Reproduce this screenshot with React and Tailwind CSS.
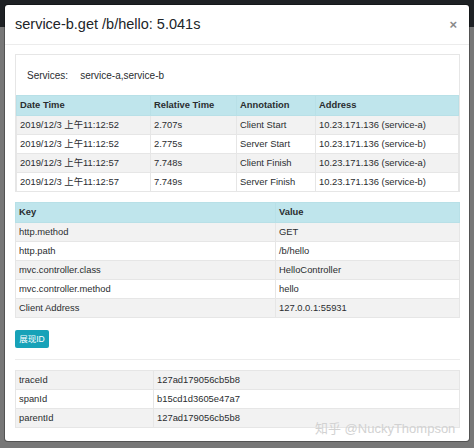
import React from 'react'

const spans = [
  ['2019/12/3 上午11:12:52', '2.707s', 'Client Start', '10.23.171.136 (service-a)'],
  ['2019/12/3 上午11:12:52', '2.775s', 'Server Start', '10.23.171.136 (service-b)'],
  ['2019/12/3 上午11:12:57', '7.748s', 'Client Finish', '10.23.171.136 (service-a)'],
  ['2019/12/3 上午11:12:57', '7.749s', 'Server Finish', '10.23.171.136 (service-b)'],
]

const tags = [
  ['http.method', 'GET'],
  ['http.path', '/b/hello'],
  ['mvc.controller.class', 'HelloController'],
  ['mvc.controller.method', 'hello'],
  ['Client Address', '127.0.0.1:55931'],
]

const ids = [
  ['traceId', '127ad179056cb5b8'],
  ['spanId', 'b15cd1d3605e47a7'],
  ['parentId', '127ad179056cb5b8'],
]

const Table = ({ head, rows, widths }) => (
  <table className="w-full table-fixed border-collapse text-[9.4px] text-[#2a2d30]">
    <colgroup>
      {widths.map((w, i) => (
        <col key={i} className={w} />
      ))}
    </colgroup>
    {head && (
      <thead>
        <tr className="h-[20px] bg-[#bfe5ec]">
          {head.map((h) => (
            <th key={h} className="border border-[#b8e0e7] px-[3px] text-left font-bold">
              {h}
            </th>
          ))}
        </tr>
      </thead>
    )}
    <tbody>
      {rows.map((r, i) => (
        <tr key={i} className={i % 2 === 0 ? 'h-[19px] bg-[#f2f2f2]' : 'h-[19px] bg-white'}>
          {r.map((c, j) => (
            <td key={j} className="border border-[#e6e6e6] px-[3px] whitespace-nowrap">
              {c}
            </td>
          ))}
        </tr>
      ))}
    </tbody>
  </table>
)

const App = () => {
  return (
    <div
      className="relative w-[474px] h-[448px] overflow-hidden bg-[linear-gradient(#1e2124_27px,#777777_27px)] p-[5px]"
      style={{ fontFamily: '"Liberation Sans", Arial, "Noto Sans CJK SC", sans-serif' }}
    >
      <div className="h-[436px] w-[464px] rounded-[3px] bg-white shadow-[0_0_0_1px_rgba(0,0,0,0.3)]">
        {/* Header */}
        <div className="flex h-[40px] items-center justify-between border-b border-[#ececec] pl-[10px] pr-[12px]">
          <h2 className="text-[14.5px] text-[#212529]">service-b.get /b/hello: 5.041s</h2>
          <span className="text-[13px] font-bold leading-none text-[#8a8a8a]">×</span>
        </div>

        {/* Body */}
        <div className="pl-[10px] pr-[9px] pt-[9px]">
          <div className="border border-[#e6e6e6] border-b-0">
            <div className="flex h-[40px] items-center gap-[12px] pl-[11px] text-[10px] text-[#2a2d30]">
              <span>Services:</span>
              <span>service-a,service-b</span>
            </div>
            <Table
              head={['Date Time', 'Relative Time', 'Annotation', 'Address']}
              rows={spans}
              widths={['w-[134px]', 'w-[86px]', 'w-[79px]', 'w-auto']}
            />
          </div>

          <div className="mt-[10px]">
            <Table head={['Key', 'Value']} rows={tags} widths={['w-[260px]', 'w-auto']} />
          </div>

          <button className="mt-[12px] h-[18px] w-[34px] rounded-[2px] bg-[#17a2b8] text-[8.5px] text-white">
            展现ID
          </button>

          <hr className="mt-[10px] border-[#ececec]" />

          <div className="mt-[10px]">
            <Table rows={ids} widths={['w-[138px]', 'w-auto']} />
          </div>
        </div>
      </div>

      {/* watermark */}
      <span className="absolute left-[315px] top-[419px] text-[13px] text-[#d2d2d2]">
        知乎 @NuckyThompson
      </span>
    </div>
  )
}

export default App
